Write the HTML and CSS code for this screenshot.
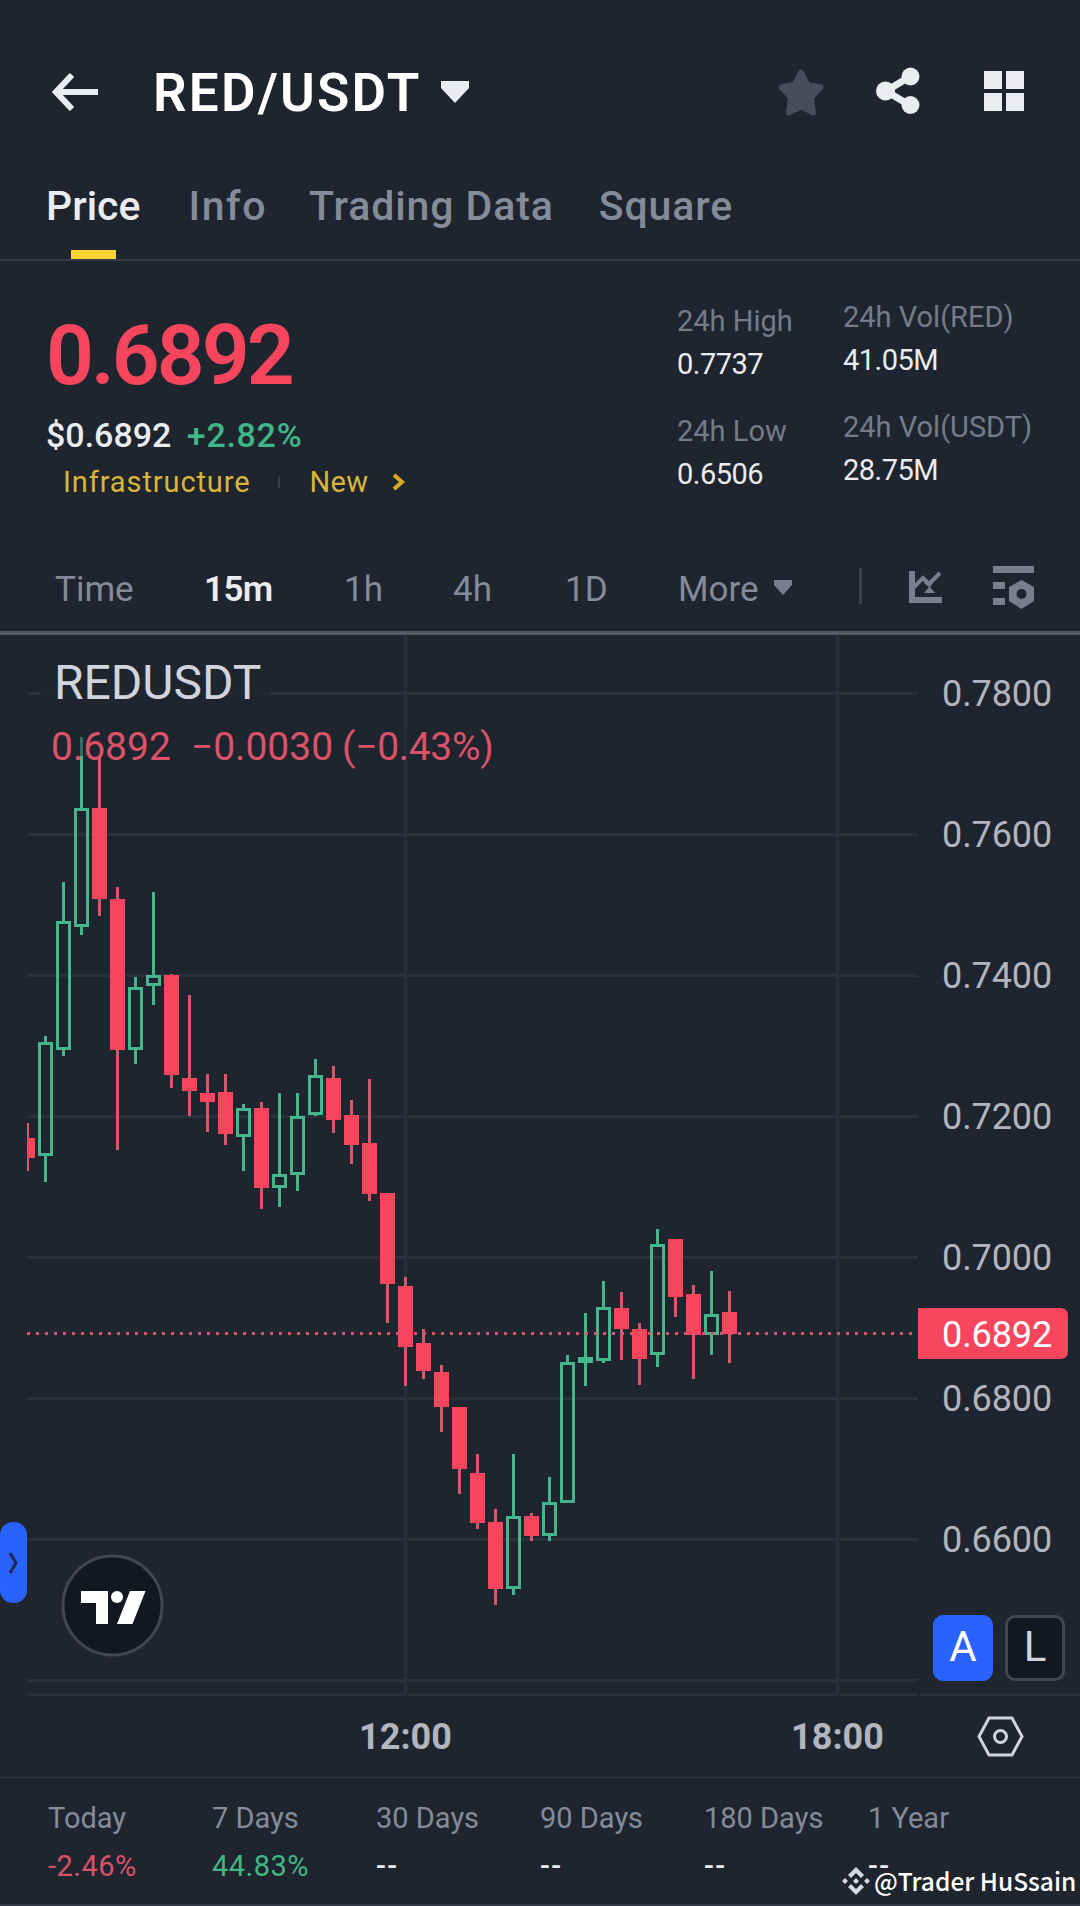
FILE: index.html
```html
<!DOCTYPE html>
<html lang="en">
<head>
	<title>RED/USDT</title>
	<meta charset="utf-8">
	<link rel="stylesheet" href="styles.css">
</head>
<body>

<header class="topbar">
	<svg class="back" width="46" height="38" viewBox="0 0 46 38"><path d="M20 2L4 19l16 17M4 19h42" fill="none" stroke="#eaecef" stroke-width="6"/></svg>
	<h1>RED/USDT</h1>
	<svg class="caret" width="28" height="22" viewBox="0 0 28 22"><path d="M0 0h28v7L14 22 0 7z" fill="#eaecef"/></svg>
	<svg class="star" width="46" height="48" viewBox="0 0 46 48"><path d="M23 3l6.500 12.500 13.500 2.500-9.500 10.500 2 15.500L23 38l-12.500 6 2-15.500L3 18l13.500-2.500z" fill="#474d5a" stroke="#474d5a" stroke-width="5" stroke-linejoin="round"/></svg>
	<svg class="share" width="44" height="48" viewBox="0 0 44 48"><path d="M35 9L10 24l25 15" fill="none" stroke="#eaecef" stroke-width="7"/><circle cx="9.500" cy="24" r="9.500" fill="#eaecef"/><circle cx="34.500" cy="9.500" r="9" fill="#eaecef"/><circle cx="34.500" cy="38" r="9" fill="#eaecef"/></svg>
	<svg class="apps" width="40" height="40" viewBox="0 0 40 40"><path d="M0 0h18v18H0zM22 0h18v18H22zM0 22h18v18H0zM22 22h18v18H22z" fill="#eaecef"/></svg>
</header>

<nav class="tabs">
	<a class="tab active">Price</a>
	<a class="tab info">Info</a>
	<a class="tab trading">Trading Data</a>
	<a class="tab">Square</a>
</nav>

<section class="summary">
	<div class="quote">
		<div class="price">0.6892</div>
		<div class="fiat">$0.6892 <span class="up">+2.82%</span></div>
		<div class="tags">
			<span class="tag">Infrastructure</span>
			<i class="tick"></i>
			<span class="tag new">New</span>
			<svg width="14" height="18" viewBox="0 0 14 18"><path d="M2 2l8 7-8 7" fill="none" stroke="#d9ab25" stroke-width="4"/></svg>
		</div>
	</div>
	<div class="stats">
		<div class="label">24h High</div>
		<div class="value">0.7737</div>
		<div class="label">24h Low</div>
		<div class="value">0.6506</div>
	</div>
	<div class="stats volume">
		<div class="label">24h Vol(RED)</div>
		<div class="value">41.05M</div>
		<div class="label">24h Vol(USDT)</div>
		<div class="value">28.75M</div>
	</div>
</section>

<nav class="intervals">
	<a>Time</a>
	<a class="active">15m</a>
	<a>1h</a>
	<a>4h</a>
	<a>1D</a>
	<a class="more">More <svg width="18" height="15" viewBox="0 0 18 15"><path d="M0 0h18v5L9 15 0 5z" fill="#787f8e"/></svg></a>
	<i class="divider"></i>
	<svg class="tool" width="33" height="34" viewBox="0 0 33 34"><path d="M3 1v29h30" fill="none" stroke="#787f8e" stroke-width="6"/><path d="M5 17l9-9 6 6L31 3" fill="none" stroke="#787f8e" stroke-width="4"/><path d="M15 13h9l-3 4 5 6H15l5-6z" fill="#787f8e"/></svg>
	<svg class="tool" width="41" height="44" viewBox="0 0 41 44"><path d="M0 1h41v7H0zM0 17h12v7H0zM0 33h12v7H0z" fill="#787f8e"/><path fill-rule="evenodd" d="M28.500 15L41 22v14l-12.500 8L16 36V22zM28.500 24a5 5 0 1 0 0 10 5 5 0 0 0 0-10z" fill="#787f8e"/></svg>
</nav>

<main class="chart">
	<svg id="plot" width="1080" height="1142" viewBox="0 635 1080 1142">
		<g id="grid"></g>
		<g id="candles"></g>
		<path d="M27 1333.500H916" class="last"/>
		<g id="scale"></g>
		<path d="M918 1308h142q8 0 8 8v35q0 8-8 8H918z" fill="#f6465d"/>
		<text x="942" y="1347" class="num lastnum">0.6892</text>
		<text x="405.500" y="1749" class="hour">12:00</text>
		<text x="837.500" y="1749" class="hour">18:00</text>
		<path d="M989 1718h23l10 18.500-10 18.500h-23l-10-18.500z" fill="none" stroke="#d1d4dc" stroke-width="3"/>
		<circle cx="1000.500" cy="1736.500" r="6" fill="none" stroke="#d1d4dc" stroke-width="3"/>
		<circle cx="112.500" cy="1605.500" r="49.500" fill="#131722" stroke="#434651" stroke-width="3"/>
		<path d="M81 1591h27v33H96v-21H81zM130 1591h15.500l-13 33H117z" fill="#fff"/>
		<circle cx="117" cy="1597" r="6" fill="#fff"/>
	</svg>
	<div class="legend">
		<div class="symbol">REDUSDT</div>
		<div class="change"><span>0.6892</span><span>−0.0030</span><span class="percent">(−0.43%)</span></div>
	</div>
	<div class="drawer"><svg width="12" height="24" viewBox="0 0 12 24"><path d="M2 2l6 10-6 10" fill="none" stroke="#1e2a4a" stroke-width="3"/></svg></div>
	<div class="modes"><b class="auto">A</b><b class="log">L</b></div>
</main>

<section class="performance">
	<div><span>Today</span><strong class="down">-2.46%</strong></div>
	<div><span>7 Days</span><strong class="up">44.83%</strong></div>
	<div><span>30 Days</span><strong class="none">--</strong></div>
	<div><span>90 Days</span><strong class="none">--</strong></div>
	<div><span>180 Days</span><strong class="none">--</strong></div>
	<div><span>1 Year</span><strong class="none">--</strong></div>
	<div class="author">
		<svg width="28" height="28" viewBox="0 0 28 28"><path d="M14 0l8 8-3 3-5-5-5 5-3-3zM14 28l-8-8 3-3 5 5 5-5 3 3zM14 11l3 3-3 3-3-3zM3 11l3 3-3 3-3-3zM25 11l3 3-3 3-3-3z" fill="#d5d8de"/></svg>
		<span>@Trader HuSsain</span>
	</div>
</section>

<script src="chart.js"></script>
</body>
</html>
```
FILE: styles.css
```css
body {
	margin: 0;
	width: 1080px;
	height: 1906px;
	overflow: hidden;
	background-color: #1f252f;
	color: #eaecef;
	font-family: Roboto, "Liberation Sans", sans-serif;
}
svg {
	display: block;
}
.up {
	color: #41b687;
}
.down {
	color: #d9526a;
}

/* top bar */
.topbar {
	display: flex;
	align-items: center;
	height: 114px;
	padding: 36px 56px 0 52px;
}
.back {
	margin-top: -3px;
}
h1 {
	margin: 0 0 0 55px;
	width: 268px;
	color: #fff;
	font-size: 53px;
	font-weight: 600;
	letter-spacing: 2.2px;
	line-height: 60px;
	white-space: nowrap;
}
.caret {
	margin: -3px auto 0 20px;
}
.star {
	margin-right: 52px;
}
.share {
	margin: -4px 64px 0 0;
}
.apps {
	margin-top: -4px;
}

/* tabs */
.tabs {
	display: flex;
	gap: 48px;
	height: 109px;
	padding-left: 46px;
	border-bottom: 2px solid #333b47;
}
.tab {
	position: relative;
	color: #848b99;
	font-size: 41px;
	font-weight: 500;
	letter-spacing: .9px;
	line-height: 112px;
	white-space: nowrap;
}
.tab.active {
	color: #eaecef;
	letter-spacing: 0;
}
.tab.active::after {
	content: "";
	position: absolute;
	left: 25px;
	bottom: 0;
	width: 45px;
	height: 9px;
	background-color: #fcd535;
}
.info {
	margin-right: -6px;
	letter-spacing: 1.6px;
}
.trading {
	margin-right: -3px;
}

/* price summary */
.summary {
	display: flex;
	height: 287px;
}
.quote {
	width: 631px;
	padding-left: 46px;
}
.price {
	margin-top: 50px;
	color: #f6465d;
	font-size: 84px;
	font-weight: 600;
	line-height: 90px;
	letter-spacing: -3px;
}
.fiat {
	margin-top: 12px;
	font-size: 34px;
	font-weight: 500;
	line-height: 44px;
	white-space: pre;
}
.fiat .up {
	margin-left: 7px;
	letter-spacing: .7px;
}
.tags {
	display: flex;
	align-items: center;
	height: 50px;
	padding-left: 17px;
	color: #d9b53c;
	font-size: 29px;
	letter-spacing: .9px;
}
.tick {
	width: 2px;
	height: 12px;
	margin: 0 29px 0 28px;
	background-color: #343c47;
}
.new {
	margin-right: 23px;
	letter-spacing: .4px;
}
.stats {
	width: 166px;
	padding-top: 39px;
	font-size: 29px;
	line-height: 43px;
	white-space: nowrap;
}
.stats .label {
	color: #757c89;
}
.stats .value {
	margin-bottom: 24px;
	letter-spacing: -.5px;
}
.volume {
	padding-top: 35px;
}

/* interval picker */
.intervals {
	display: grid;
	grid-template-columns: 149px 140px 109px 112px 113px 181px 50px 84px 41px;
	align-items: center;
	height: 83px;
	padding-left: 55px;
	border-bottom: 4px solid #555b66;
	color: #848b99;
	font-size: 35px;
}
.intervals .active {
	color: #eaecef;
	font-weight: 600;
	letter-spacing: -.6px;
}
.more {
	display: flex;
	align-items: center;
	gap: 15px;
}
.more svg {
	margin-top: -5px;
}
.divider {
	width: 3px;
	height: 36px;
	margin-top: -7px;
	background-color: #3a404b;
}
.tool {
	margin-top: -5px;
}

/* chart */
.chart {
	position: relative;
	height: 1142px;
	border-bottom: 1px solid #333b47;
}
.last {
	fill: none;
	stroke: #d9566c;
	stroke-width: 3;
	stroke-dasharray: 3 6;
}
.num {
	fill: #b2b5be;
	font-size: 36px;
	letter-spacing: -.1px;
}
.lastnum {
	fill: #fff;
}
.hour {
	fill: #b2b5be;
	font-size: 36px;
	font-weight: 700;
	text-anchor: middle;
}
.legend {
	position: absolute;
	left: 40px;
	top: 18px;
}
.symbol {
	width: 216px;
	padding-left: 14px;
	color: #d1d4dc;
	background-color: rgba(31, 37, 47, .8);
	font-size: 48px;
	line-height: 60px;
}
.change {
	display: flex;
	gap: 20px;
	margin-top: 12px;
	padding-left: 11px;
	height: 31px;
	color: #dc5268;
	background-color: rgba(31, 37, 47, .5);
	font-size: 39px;
	line-height: 44px;
}
.percent {
	margin-left: -11px;
	letter-spacing: -.3px;
}
.drawer {
	position: absolute;
	left: 0;
	top: 887px;
	display: flex;
	align-items: center;
	justify-content: center;
	width: 27px;
	height: 81px;
	border-radius: 13px;
	background-color: #2962ff;
}
.modes {
	position: absolute;
	left: 933px;
	top: 980px;
	display: flex;
	gap: 12px;
}
.modes b {
	box-sizing: border-box;
	width: 60px;
	height: 66px;
	border-radius: 10px;
	font-size: 42px;
	font-weight: 400;
	text-align: center;
}
.auto {
	border: 1px solid #2962ff;
	background-color: #2962ff;
	color: #fff;
	line-height: 62px;
}
.log {
	border: 3px solid #434651;
	background-color: #131722;
	color: #d1d4dc;
	line-height: 58px;
}

/* performance */
.performance {
	position: relative;
	display: grid;
	grid-template-columns: repeat(6, 164px);
	height: 109px;
	padding: 17px 0 0 48px;
	border-bottom: 2px solid #333b47;
	font-size: 29px;
	white-space: nowrap;
}
.performance span {
	display: block;
	color: #848b99;
	line-height: 46px;
}
.performance strong {
	display: block;
	font-weight: 400;
	letter-spacing: .5px;
	line-height: 50px;
}
.performance .none {
	font-weight: 500;
	letter-spacing: 1.5px;
}
.performance .author {
	position: absolute;
	left: 842px;
	top: 89px;
	display: flex;
	align-items: center;
	gap: 4px;
}
.performance .author span {
	color: #fff;
	font-family: "Noto Sans CJK SC", "Noto Sans", sans-serif;
	font-size: 24.5px;
	font-weight: 500;
	line-height: 28px;
}
```
FILE: chart.js
```js
// one row per candle: direction, high, body top, body bottom, low
var candles = [
	["r",1123,1138,1158,1171],
	["g",1036,1042,1156,1182],
	["g",882,921,1050,1056],
	["g",737,808,927,935],
	["r",757,808,899,916],
	["r",887,899,1050,1150],
	["g",977,987,1050,1064],
	["g",892,975,986,1005],
	["r",974,975,1075,1088],
	["r",995,1078,1091,1116],
	["r",1074,1093,1102,1132],
	["r",1074,1092,1134,1145],
	["g",1104,1108,1137,1171],
	["r",1102,1108,1188,1209],
	["g",1093,1174,1188,1207],
	["g",1093,1116,1175,1191],
	["g",1059,1075,1115,1116],
	["r",1066,1078,1120,1133],
	["r",1100,1115,1145,1164],
	["r",1079,1143,1194,1201],
	["r",1193,1193,1284,1323],
	["r",1277,1286,1347,1386],
	["r",1329,1343,1371,1379],
	["r",1365,1372,1407,1432],
	["r",1407,1407,1469,1494],
	["r",1454,1473,1523,1529],
	["r",1509,1522,1589,1605],
	["g",1454,1516,1589,1595],
	["r",1513,1516,1536,1541],
	["g",1477,1502,1536,1541],
	["g",1355,1362,1503,1503],
	["g",1313,1357,1363,1386],
	["g",1281,1307,1361,1363],
	["r",1292,1308,1329,1360],
	["r",1323,1329,1359,1385],
	["g",1229,1244,1355,1367],
	["r",1239,1239,1297,1317],
	["r",1285,1294,1335,1379],
	["g",1271,1314,1335,1355],
	["r",1291,1312,1334,1363]
];

function rect(x, y, w, h, fill) {
	return '<rect x="' + x + '" y="' + y + '" width="' + w + '" height="' + h + '" fill="' + fill + '"/>';
}

var out = "";
var i, c, x, col;

for (i = 0; i < candles.length; i++) {
	c = candles[i];
	x = 20 + i*18;
	if (c[0] == "g") {
		col = "#45b58b";
		out += rect(x+6, c[1], 3, c[2]-c[1], col);
		out += rect(x+6, c[3], 3, c[4]-c[3], col);
		out += '<rect x="' + (x+1.5) + '" y="' + (c[2]+1.5) + '" width="12" height="' + (c[3]-c[2]-3) + '" fill="none" stroke="' + col + '" stroke-width="3"/>';
	}
	else {
		out += rect(x+6, c[1], 3, c[4]-c[1], "#d9566c");
		out += rect(x, c[2], 15, c[3]-c[2], "#f6465d");
	}
}
// the first candle is cut off by the plot edge
out += rect(0, 1100, 27, 80, "#1f252f");
document.getElementById("candles").innerHTML = out;

var grid = "";
var scale = "";
for (i = 0; i < 8; i++) {
	grid += rect(27, 692 + i*141, 891, 3, "#2a303b");
	if (i < 7) {
		scale += '<text x="942" y="' + (706 + i*141) + '" class="num">' + (0.78 - i*0.02).toFixed(4) + '</text>';
	}
}
grid += rect(404, 635, 3, 1061, "#2a303b") + rect(836, 635, 3, 1061, "#2a303b");
grid += rect(27, 1693, 891, 3, "#292f3a") + rect(921, 1693, 159, 3, "#292f3a");
document.getElementById("grid").innerHTML = grid;
document.getElementById("scale").innerHTML = scale;
```
